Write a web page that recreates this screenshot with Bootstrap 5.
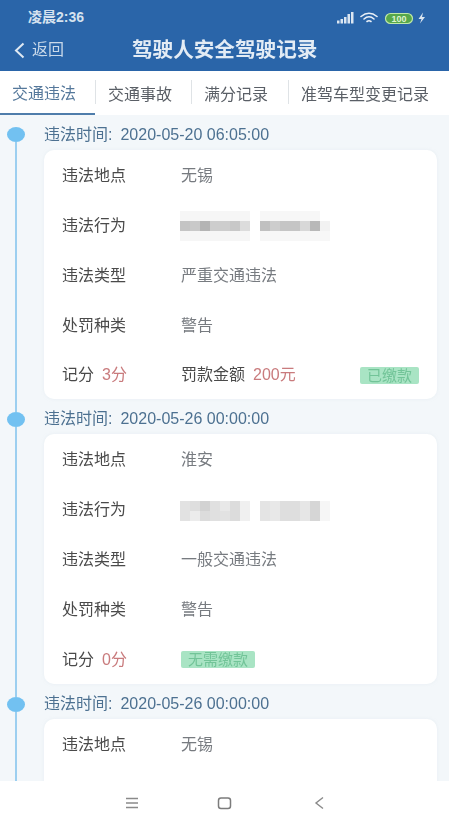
<!DOCTYPE html>
<html lang="zh-CN">
<head>
<meta charset="utf-8">
<title>驾驶人安全驾驶记录</title>
<link href="https://cdn.jsdelivr.net/npm/bootstrap@5.3.0/dist/css/bootstrap.min.css" rel="stylesheet">
<style>
html,body{height:100%;margin:0;overflow:hidden}
body{font-family:"Liberation Sans","Noto Sans CJK SC",sans-serif;background:#f3f7fa}
.app-shell{height:826px;width:449px;filter:blur(.6px)}
.top-bar{background:#2a65a9;height:71px;color:#e6eef6;flex:none}
.status-line{height:35px;padding:0 22px 0 28px}
.status-time{font-size:14px;font-weight:700;color:#d5e2ef}
.title-line{height:36px;padding:0 14px 6px}
.back-link{width:118px;font-size:16px;color:#c9d9ea;gap:7px}
.page-title{font-size:20.6px;font-weight:700;color:#e3ecf5;line-height:1}
.tab-strip{height:44px;background:#fff;flex:none;flex-wrap:nowrap}
.tab-item{color:#5a5f66;font-size:16px;padding:3px 12px 0;line-height:24px;height:100%;display:flex;align-items:center;white-space:nowrap}
.tab-item:hover{color:#5a5f66}
.tab-sep{border-right:1px solid #dfe3e6;height:24px;margin-top:9px;flex:none}
.tab-active,.tab-active:hover{color:#55789b}
.tab-active{width:95px;border-bottom:2px solid #4f7dab}
.tab-w{width:95px}
.tab-w2{width:96px}
.tl-area{min-height:0;overflow:hidden;flex:1 1 0}
.tl-entry{flex:none}
.tl-rail{width:32px;margin-right:12px;flex:none}
.tl-dot{width:18px;height:15px;border-radius:50%;background:#72c1f1;flex:none}
.tl-line{width:2px;background:#9ccff0;flex:1 1 auto}
.tl-head-gap{height:12px;width:2px}
.tl-stub{flex:0 0 13px}
.pt-first{padding-top:5px}
.tl-when{height:30px;font-size:16px;color:#4d7191;padding-top:4px;line-height:22px}
.tl-gap{height:35px;padding-top:9px}
.tl-colon{margin-right:8px}
.rec-card{background:#fff;border-radius:10px;width:393px;padding:0 18px;box-shadow:0 0 3px rgba(220,230,238,.5)}
.rec-row{height:50px;font-size:16px;color:#4a4a4a;padding-top:1px}
.rec-row-short{height:49px}
.rec-label{width:119px;flex:none}
.rec-val{color:#777b80}
.rec-red{color:#c97b7d;margin-left:8px}
.score-w{width:79px;flex:none}
.pay-pill{background:#a9e4c4;color:#72c498;font-size:15px;line-height:17px;height:17px;padding:0 7px;border-radius:2px}
.mosaic{margin-left:-1px}
.nav-foot{height:45px;background:#fff;flex:none;position:relative}
.nav-foot svg{position:absolute;top:14px}
.i-menu{left:125px}.i-home{left:217px}.i-back{left:313px}
</style>
</head>
<body>
<svg width="0" height="0" class="d-block" aria-hidden="true"><defs><filter id="soft" x="-5%" y="-20%" width="110%" height="140%"><feGaussianBlur stdDeviation="0.700"/></filter></defs></svg>
<div class="app-shell d-flex flex-column">
  <header class="top-bar">
    <div class="status-line d-flex justify-content-between align-items-center">
      <span class="status-time">凌晨2:36</span>
      <svg width="90" height="14" viewBox="0 0 90 14" aria-hidden="true">
        <g fill="#dbe6f1"><rect x="0" y="9.500" width="2.500" height="3"/><rect x="3.500" y="8" width="2.500" height="4.500"/><rect x="7" y="6" width="2.500" height="6.500"/><rect x="10.500" y="3" width="2.500" height="9.500"/><rect x="14" y="1" width="2.500" height="11.500"/></g>
        <g fill="none" stroke="#e8eff7" stroke-width="1.600" stroke-linecap="round"><path d="M24 5.500Q32 -1 40 5.500"/><path d="M27 8Q32 3.500 37 8"/><path d="M30 10.500Q32 9 34 10.500"/></g>
        <rect x="48.500" y="2.500" width="27" height="10" rx="5" fill="#57a74a" stroke="#bfe8a6" stroke-width="1.200"/>
        <text x="62" y="10.800" text-anchor="middle" font-size="9" font-weight="700" fill="#dff3cf">100</text>
        <path d="M86 1.500L81.500 8H84.500L83 12.500L88 6H85Z" fill="#dbe6f1"/>
      </svg>
    </div>
    <div class="title-line d-flex align-items-center">
      <div class="back-link d-flex align-items-center">
        <svg width="11" height="17" viewBox="0 0 11 17" aria-hidden="true"><path d="M9.500 1.500L2 8.500L9.500 15.500" fill="none" stroke="#dfe9f3" stroke-width="2"/></svg>
        <span>返回</span>
      </div>
      <div class="page-title">驾驶人安全驾驶记录</div>
    </div>
  </header>

  <nav class="nav tab-strip">
    <a class="nav-link tab-item tab-active" href="#">交通违法</a>
    <span class="tab-sep"></span>
    <a class="nav-link tab-item tab-w" href="#">交通事故</a>
    <span class="tab-sep"></span>
    <a class="nav-link tab-item tab-w2" href="#">满分记录</a>
    <span class="tab-sep"></span>
    <a class="nav-link tab-item" href="#">准驾车型变更记录</a>
  </nav>

  <main class="tl-area">
    <section class="tl-entry d-flex">
      <div class="tl-rail d-flex flex-column align-items-center"><div class="tl-head-gap"></div><div class="tl-dot"></div><div class="tl-line"></div></div>
      <div class="pt-first">
        <div class="tl-when"><span class="tl-colon">违法时间:</span>2020-05-20 06:05:00</div>
        <div class="rec-card">
          <div class="rec-row d-flex align-items-center"><span class="rec-label">违法地点</span><span class="rec-val">无锡</span></div>
          <div class="rec-row d-flex align-items-center"><span class="rec-label">违法行为</span>
            <svg class="mosaic" width="152" height="30" viewBox="0 0 152 30" aria-label="已打码"><g filter="url(#soft)">
              <rect x="0" y="0" width="70" height="10" fill="#f6f6f6"/><rect x="80" y="0" width="60" height="10" fill="#f7f7f7"/>
              <rect x="0" y="20" width="70" height="10" fill="#f6f6f6"/><rect x="80" y="20" width="70" height="10" fill="#f7f7f7"/>
              <rect x="0" y="10" width="10" height="10" fill="#c4c4c4"/><rect x="10" y="10" width="10" height="10" fill="#c9c9c9"/><rect x="20" y="10" width="10" height="10" fill="#b4b4b4"/><rect x="30" y="10" width="20" height="10" fill="#cdcdcd"/><rect x="50" y="10" width="10" height="10" fill="#c8c8c8"/><rect x="60" y="10" width="10" height="10" fill="#dcdcdc"/>
              <rect x="80" y="10" width="10" height="10" fill="#c0c0c0"/><rect x="90" y="10" width="10" height="10" fill="#cdcdcd"/><rect x="100" y="10" width="20" height="10" fill="#c5c5c5"/><rect x="120" y="10" width="10" height="10" fill="#d8d8d8"/><rect x="130" y="10" width="10" height="10" fill="#b8b8b8"/><rect x="140" y="10" width="10" height="10" fill="#f2f2f2"/>
            </g></svg>
          </div>
          <div class="rec-row d-flex align-items-center"><span class="rec-label">违法类型</span><span class="rec-val">严重交通违法</span></div>
          <div class="rec-row d-flex align-items-center"><span class="rec-label">处罚种类</span><span class="rec-val">警告</span></div>
          <div class="rec-row rec-row-short d-flex align-items-center"><span>记分</span><span class="rec-red score-w">3分</span><span>罚款金额</span><span class="rec-red">200元</span><span class="pay-pill ms-auto">已缴款</span></div>
        </div>
      </div>
    </section>

    <section class="tl-entry d-flex">
      <div class="tl-rail d-flex flex-column align-items-center"><div class="tl-line tl-stub"></div><div class="tl-dot"></div><div class="tl-line"></div></div>
      <div>
        <div class="tl-when tl-gap"><span class="tl-colon">违法时间:</span>2020-05-26 00:00:00</div>
        <div class="rec-card">
          <div class="rec-row d-flex align-items-center"><span class="rec-label">违法地点</span><span class="rec-val">淮安</span></div>
          <div class="rec-row d-flex align-items-center"><span class="rec-label">违法行为</span>
            <svg class="mosaic" width="152" height="30" viewBox="0 0 152 30" aria-label="已打码"><g filter="url(#soft)">
              <rect x="0" y="6" width="10" height="20" fill="#e2e2e2"/><rect x="10" y="6" width="10" height="10" fill="#dedede"/><rect x="10" y="16" width="10" height="10" fill="#ececec"/><rect x="20" y="6" width="10" height="10" fill="#d2d2d2"/><rect x="20" y="16" width="10" height="10" fill="#dcdcdc"/><rect x="30" y="6" width="10" height="20" fill="#e0e0e0"/><rect x="40" y="6" width="10" height="10" fill="#e8e8e8"/><rect x="40" y="16" width="10" height="10" fill="#e2e2e2"/><rect x="50" y="6" width="10" height="20" fill="#dcdcdc"/><rect x="60" y="6" width="10" height="20" fill="#f0f0f0"/>
              <rect x="80" y="6" width="10" height="20" fill="#e4e4e4"/><rect x="90" y="6" width="10" height="20" fill="#e8e8e8"/><rect x="100" y="6" width="20" height="20" fill="#dedede"/><rect x="120" y="6" width="10" height="20" fill="#e6e6e6"/><rect x="130" y="6" width="10" height="20" fill="#d6d6d6"/><rect x="140" y="6" width="10" height="20" fill="#f6f6f6"/>
            </g></svg>
          </div>
          <div class="rec-row d-flex align-items-center"><span class="rec-label">违法类型</span><span class="rec-val">一般交通违法</span></div>
          <div class="rec-row d-flex align-items-center"><span class="rec-label">处罚种类</span><span class="rec-val">警告</span></div>
          <div class="rec-row d-flex align-items-center"><span>记分</span><span class="rec-red score-w">0分</span><span class="pay-pill">无需缴款</span></div>
        </div>
      </div>
    </section>

    <section class="tl-entry d-flex">
      <div class="tl-rail d-flex flex-column align-items-center"><div class="tl-line tl-stub"></div><div class="tl-dot"></div><div class="tl-line"></div></div>
      <div>
        <div class="tl-when tl-gap"><span class="tl-colon">违法时间:</span>2020-05-26 00:00:00</div>
        <div class="rec-card">
          <div class="rec-row d-flex align-items-center"><span class="rec-label">违法地点</span><span class="rec-val">无锡</span></div>
          <div class="rec-row"></div>
        </div>
      </div>
    </section>
  </main>

  <footer class="nav-foot">
    <svg class="i-menu" width="14" height="16" viewBox="0 0 14 16" aria-hidden="true"><path d="M1 3.500H13M1 8H13M1 12.500H13" stroke="#8a8a8a" stroke-width="1.300"/></svg>
    <svg class="i-home" width="15" height="16" viewBox="0 0 15 16" aria-hidden="true"><rect x="1.500" y="3" width="12" height="10.500" rx="2.500" fill="none" stroke="#7c7c7c" stroke-width="1.500"/></svg>
    <svg class="i-back" width="12" height="16" viewBox="0 0 12 16" aria-hidden="true"><path d="M10 2.500L3 8L10 13.500" fill="none" stroke="#8a8a8a" stroke-width="1.400"/></svg>
  </footer>
</div>
<script src="https://cdn.jsdelivr.net/npm/bootstrap@5.3.0/dist/js/bootstrap.bundle.min.js"></script>
</body>
</html>
